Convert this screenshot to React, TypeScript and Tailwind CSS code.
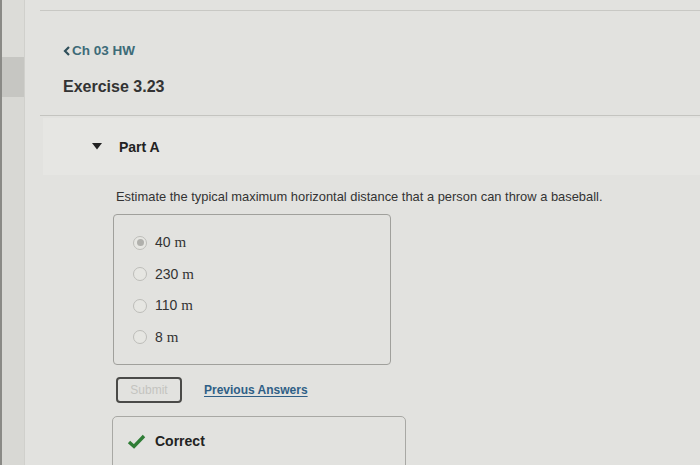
import React from "react";

const OPTIONS = [
  { n: "40", u: "m" },
  { n: "230", u: "m" },
  { n: "110", u: "m" },
  { n: "8", u: "m" },
];

function Radio({ checked }: { checked: boolean }) {
  return (
    <span className="flex h-[14px] w-[14px] shrink-0 items-center justify-center rounded-full border border-[#bdbdb9] bg-[#e6e6e2]">
      {checked && <span className="h-[7px] w-[7px] rounded-full bg-[#b0b0ac]" />}
    </span>
  );
}

export default function App() {
  return (
    <div
      className="flex h-[465px] w-[700px] overflow-hidden bg-[#e2e2df] text-[#2e2e2e]"
      style={{ fontFamily: '"Liberation Sans", Arial, sans-serif' }}
    >
      {/* left sidebar strip */}
      <div className="flex w-[25px] shrink-0 flex-col border-l-2 border-[#8a8a86] border-r border-r-[#d0d0cc]">
        <div className="h-[57px] shrink-0 bg-[#dcdcd8]" />
        <div className="h-[40px] shrink-0 bg-[#c6c6c2]" />
        <div className="flex-1 bg-[#d8d8d4]" />
      </div>

      <div className="min-w-0 flex-1">
        <div className="ml-[15px] mt-[10px] h-px bg-[#c8c8c4]" />

        <div className="pl-[38px] pt-[32px]">
          <div className="flex items-center text-[13.5px] font-bold leading-[16px] text-[#3d6b78]">
            <svg width="7" height="10" viewBox="0 0 7 10" className="mr-[2px]">
              <path d="M6 1 L2 5 L6 9" fill="none" stroke="#2f4f5a" strokeWidth="2.2" />
            </svg>
            Ch 03 HW
          </div>
          <div className="mt-[18px] text-[16px] font-semibold leading-[20px] text-[#333]">
            Exercise 3.23
          </div>
        </div>

        <div className="ml-[15px] mt-[18px] h-px bg-[#c4c4c0]" />

        {/* Part A header */}
        <div className="ml-[18px] mt-[2px] flex h-[57px] items-center bg-[#e6e6e3] pl-[49px]">
          <svg width="10" height="7" viewBox="0 0 10 7" className="mr-[17px]">
            <path d="M0 0 L10 0 L5 6.5 Z" fill="#222" />
          </svg>
          <span className="text-[14px] font-semibold leading-[18px] text-[#222]">Part A</span>
        </div>

        <div className="pl-[91px] pt-[13px]">
          <p className="text-[12.9px] leading-[18px] text-[#333]">
            Estimate the typical maximum horizontal distance that a person can throw a baseball.
          </p>

          <div className="-ml-[3px] mt-[8px] flex h-[151px] w-[278px] flex-col gap-[16.5px] rounded-[4px] border border-[#a0a09c] pl-[19px] pt-[20px]">
            {OPTIONS.map((o, i) => (
              <label key={o.n} className="flex h-[15px] items-center gap-[8px]">
                <Radio checked={i === 0} />
                <span className="text-[14px] text-[#333]">
                  {o.n}{" "}
                  <span style={{ fontFamily: '"Liberation Serif", "Times New Roman", serif' }} className="text-[15px]">
                    {o.u}
                  </span>
                </span>
              </label>
            ))}
          </div>

          <div className="mt-[12px] flex items-center gap-[22px]">
            <button className="h-[26px] w-[66px] rounded-[4px] border-2 border-[#4a4a48] text-[12px] text-[#c4c4c0]">
              Submit
            </button>
            <span className="text-[12px] font-bold text-[#2f5f86] underline underline-offset-2">
              Previous Answers
            </span>
          </div>

          <div className="-ml-[4px] mt-[13px] flex h-[60px] w-[294px] items-start rounded-[5px] border border-[#a8a8a4] pl-[14px] pt-[14px]">
            <svg width="19" height="15" viewBox="0 0 19 15" className="mr-[9px] mt-[3px]">
              <path d="M2 8 L7 12.5 L17 2" fill="none" stroke="#2f7d36" strokeWidth="3.4" />
            </svg>
            <span className="text-[14px] font-semibold leading-[20px] text-[#222]">Correct</span>
          </div>
        </div>
      </div>
    </div>
  );
}
